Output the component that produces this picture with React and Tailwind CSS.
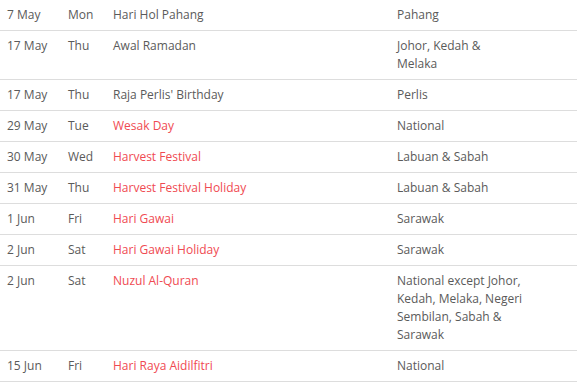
const rows = [
  { date: "7 May", day: "Mon", name: "Hari Hol Pahang", state: "Pahang", red: false },
  { date: "17 May", day: "Thu", name: "Awal Ramadan", state: "Johor, Kedah & Melaka", red: false },
  { date: "17 May", day: "Thu", name: "Raja Perlis' Birthday", state: "Perlis", red: false },
  { date: "29 May", day: "Tue", name: "Wesak Day", state: "National", red: true },
  { date: "30 May", day: "Wed", name: "Harvest Festival", state: "Labuan & Sabah", red: true },
  { date: "31 May", day: "Thu", name: "Harvest Festival Holiday", state: "Labuan & Sabah", red: true },
  { date: "1 Jun", day: "Fri", name: "Hari Gawai", state: "Sarawak", red: true },
  { date: "2 Jun", day: "Sat", name: "Hari Gawai Holiday", state: "Sarawak", red: true },
  { date: "2 Jun", day: "Sat", name: "Nuzul Al-Quran", state: "National except Johor, Kedah, Melaka, Negeri Sembilan, Sabah & Sarawak", red: true },
  { date: "15 Jun", day: "Fri", name: "Hari Raya Aidilfitri", state: "National", red: true },
];

export default function App() {
  return (
    <div className="w-[577px] h-[382px] overflow-hidden bg-white text-[12px] leading-[18px] text-[#5a5a5a]" style={{ fontFamily: '"Open Sans", sans-serif' }}>
      {rows.map((r, i) => (
        <div key={i} className="flex border-b border-[#ddd] py-[6px]">
          <div className="w-[61px] shrink-0 pl-[7px]">{r.date}</div>
          <div className="w-[45px] shrink-0 pl-[7px]">{r.day}</div>
          <div className={"w-[284px] shrink-0 pl-[7px] " + (r.red ? "text-[#f04a52]" : "")}>{r.name}</div>
          <div className="w-[133px] shrink-0 pl-[7px]">{r.state}</div>
        </div>
      ))}
    </div>
  );
}
